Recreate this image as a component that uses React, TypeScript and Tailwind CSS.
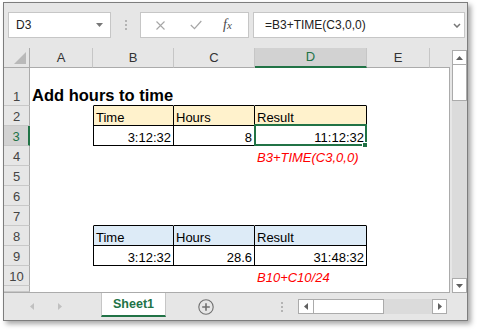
import type { ReactNode } from 'react';

// widths of columns A..F (F is the partial column at the right edge)
const COLS = ['w-[63px]', 'w-[81px]', 'w-[81px]', 'w-[112px]', 'w-[63px]', 'w-[19px]'];

type RowSpec = {
  n: number | string;
  h: string;
  edgeB?: boolean; // black line under B..D
  sides?: boolean; // black lines left of B and right of B, C, D
  bg?: string;
  selected?: boolean;
  a?: ReactNode;
  b?: ReactNode;
  c?: ReactNode;
  d?: ReactNode;
};

const Label = ({ children }: { children: ReactNode }) => (
  <span className="pl-[2px] pb-[1px] leading-[13px]">{children}</span>
);

const Value = ({ children }: { children: ReactNode }) => (
  <span className="ml-auto pr-[2px] pb-[1px] leading-[13px]">{children}</span>
);

const Note = ({ children }: { children: ReactNode }) => (
  <span className="pl-[2px] pb-[2px] leading-[13px] italic text-[#ff0000] whitespace-nowrap">{children}</span>
);

const rows: RowSpec[] = [
  {
    n: 1,
    h: 'h-[38px]',
    edgeB: true,
    a: (
      <span className="pl-[2px] pb-[3px] text-[16.5px] leading-[16.5px] font-bold text-black whitespace-nowrap">
        Add hours to time
      </span>
    ),
  },
  { n: 2, h: 'h-[20px]', edgeB: true, sides: true, bg: 'bg-[#fff2cc]', b: <Label>Time</Label>, c: <Label>Hours</Label>, d: <Label>Result</Label> },
  { n: 3, h: 'h-[20px]', edgeB: true, sides: true, selected: true, b: <Value>3:12:32</Value>, c: <Value>8</Value>, d: <Value>11:12:32</Value> },
  { n: 4, h: 'h-[20px]', d: <Note>B3+TIME(C3,0,0)</Note> },
  { n: 5, h: 'h-[20px]' },
  { n: 6, h: 'h-[20px]' },
  { n: 7, h: 'h-[20px]', edgeB: true },
  { n: 8, h: 'h-[20px]', edgeB: true, sides: true, bg: 'bg-[#ddebf7]', b: <Label>Time</Label>, c: <Label>Hours</Label>, d: <Label>Result</Label> },
  { n: 9, h: 'h-[20px]', edgeB: true, sides: true, b: <Value>3:12:32</Value>, c: <Value>28.6</Value>, d: <Value>31:48:32</Value> },
  { n: 10, h: 'h-[20px]', d: <Note>B10+C10/24</Note> },
  { n: '', h: 'h-[6px]' },
];

function SheetRow({ r }: { r: RowSpec }) {
  const line = r.edgeB ? 'border-b border-b-black' : '';
  const side = r.sides ? 'border-black' : 'border-transparent';
  const bg = r.bg ?? '';
  return (
    <div className={`flex ${r.h} shrink-0`}>
      <div
        className={`w-[26px] shrink-0 flex items-end justify-center border-b border-b-[#c8c8c8] overflow-hidden ${
          r.selected
            ? 'bg-[#d2d2d2] border-r-2 border-r-[#217346] text-[#217346]'
            : 'bg-[#e6e6e6] border-r border-r-[#ababab] text-[#444]'
        }`}
      >
        <span className="leading-[13px] pb-[2px]">{r.n}</span>
      </div>
      <div className={`${COLS[0]} shrink-0 flex items-end relative z-10 overflow-visible`}>{r.a}</div>
      <div className={`${COLS[1]} shrink-0 flex items-end border-l border-r ${side} ${line} ${bg}`}>{r.b}</div>
      <div className={`${COLS[2]} shrink-0 flex items-end border-r ${side} ${line} ${bg}`}>{r.c}</div>
      <div className={`${COLS[3]} shrink-0 flex items-end border-r ${side} ${line} ${bg} relative`}>
        {r.d}
        {r.selected && (
          <>
            <div className="absolute left-[-1px] top-[-2px] w-[113px] h-[22px] border-2 border-[#217346]" />
            <div className="absolute left-[107px] top-[16px] w-[6px] h-[6px] bg-[#217346] border border-white" />
          </>
        )}
      </div>
      <div className={`${COLS[4]} shrink-0`} />
      <div className={`${COLS[5]} shrink-0`} />
    </div>
  );
}

function ColHead({ w, label, selected, last }: { w: string; label: string; selected?: boolean; last?: boolean }) {
  return (
    <div
      className={`${w} shrink-0 flex items-center justify-center ${
        selected
          ? 'bg-[#d2d2d2] text-[#217346] border-b-2 border-b-[#217346] border-r border-r-[#c6c6c6]'
          : `bg-[#e6e6e6] text-[#333] border-b border-b-[#ababab] ${last ? '' : 'border-r border-r-[#c6c6c6]'}`
      }`}
    >
      {label}
    </div>
  );
}

const Tri = ({ dir, color }: { dir: 'up' | 'down' | 'left' | 'right'; color: string }) => {
  const pts = {
    up: '0,4 7,4 3.5,0',
    down: '0,0 7,0 3.5,4',
    left: '4,0 4,7 0,3.5',
    right: '0,0 0,7 4,3.5',
  }[dir];
  const vertical = dir === 'up' || dir === 'down';
  return (
    <svg width={vertical ? 7 : 4} height={vertical ? 4 : 7} viewBox={vertical ? '0 0 7 4' : '0 0 4 7'}>
      <polygon points={pts} fill={color} />
    </svg>
  );
};

export default function App() {
  return (
    <div className="w-[477px] h-[331px] bg-white pl-[3px] pt-[2px] font-['Liberation_Sans',Arial,sans-serif] text-[13px] text-black">
      <div className="w-[465px] h-[319px] border border-[#7d7d7d] bg-[#e6e6e6] shadow-[3px_3px_5px_rgba(0,0,0,0.35)] flex flex-col">
        {/* formula bar */}
        <div className="h-[45px] pt-[9px] flex items-start shrink-0">
          <div className="ml-[4px] w-[103px] h-[26px] bg-white border border-[#c6c6c6] flex items-center justify-between pl-[7px] pr-[7px] text-[12px] text-[#222]">
            <span>D3</span>
            <Tri dir="down" color="#777" />
          </div>
          <div className="ml-[14px] mt-[8px] flex flex-col gap-[2px]">
            <div className="w-[2px] h-[2px] bg-[#b4b4b4]" />
            <div className="w-[2px] h-[2px] bg-[#b4b4b4]" />
            <div className="w-[2px] h-[2px] bg-[#b4b4b4]" />
          </div>
          <div className="ml-[13px] w-[109px] h-[26px] bg-white border border-[#c6c6c6] flex items-center">
            <svg className="ml-[15px]" width="9" height="9" viewBox="0 0 9 9">
              <path d="M0.5 0.5 L8.5 8.5 M8.5 0.5 L0.5 8.5" stroke="#a6a6a6" strokeWidth="1.1" fill="none" />
            </svg>
            <svg className="ml-[25px]" width="12" height="10" viewBox="0 0 12 10">
              <path d="M0.8 5 L4.5 8.6 L11.3 1" stroke="#a6a6a6" strokeWidth="1.2" fill="none" />
            </svg>
            <span className="ml-[21px] font-['Liberation_Serif',serif] italic text-[14px] text-[#4a4a4a] leading-none">
              f<span className="text-[11px]">x</span>
            </span>
          </div>
          <div className="ml-[4px] w-[212px] h-[26px] bg-white border border-[#c6c6c6] flex items-center justify-between pl-[11px] pr-[3px] text-[12px] text-[#222]">
            <span>=B3+TIME(C3,0,0)</span>
            <svg width="8" height="5" viewBox="0 0 8 5">
              <path d="M1 1 L4 4 L7 1" stroke="#777" strokeWidth="1.5" fill="none" />
            </svg>
          </div>
        </div>

        {/* sheet grid + vertical scrollbar */}
        <div className="h-[245px] flex shrink-0">
          <div className="w-[446px] flex flex-col">
            <div className="h-[20px] flex shrink-0">
              <div className="w-[26px] shrink-0 bg-[#e6e6e6] border-r border-r-[#ababab] border-b border-b-[#ababab] flex items-end justify-end pr-[3px] pb-[3px]">
                <svg width="12" height="12" viewBox="0 0 12 12">
                  <polygon points="12,0 12,12 0,12" fill="#b9b9b9" />
                </svg>
              </div>
              <ColHead w={COLS[0]} label="A" />
              <ColHead w={COLS[1]} label="B" />
              <ColHead w={COLS[2]} label="C" />
              <ColHead w={COLS[3]} label="D" selected />
              <ColHead w={COLS[4]} label="E" />
              <ColHead w="w-[20px]" label="" last />
            </div>
            <div className="h-[225px] bg-white border-r border-b border-[#ababab] flex flex-col overflow-hidden">
              {rows.map((r, i) => (
                <SheetRow key={i} r={r} />
              ))}
            </div>
          </div>
          <div className="ml-[2px] w-[15px] pt-[2px] flex flex-col">
            <div className="h-[15px] bg-white border border-[#ababab] flex items-center justify-center">
              <Tri dir="up" color="#606060" />
            </div>
            <div className="h-[36px] bg-white border border-t-0 border-[#ababab]" />
            <div className="flex-1 bg-[#dbdbdb]" />
            <div className="h-[15px] bg-white border border-[#ababab] flex items-center justify-center">
              <Tri dir="down" color="#606060" />
            </div>
          </div>
        </div>

        {/* sheet tabs + horizontal scrollbar */}
        <div className="h-[27px] flex items-center shrink-0">
          <div className="ml-[26px]">
            <Tri dir="left" color="#c0c0c0" />
          </div>
          <div className="ml-[24px]">
            <Tri dir="right" color="#c0c0c0" />
          </div>
          <div className="ml-[39px] self-start w-[65px] h-[24px] bg-white border-l border-r border-[#c6c6c6] border-b-2 border-b-[#217346] flex items-center justify-center text-[12.5px] font-bold text-[#217346]">
            Sheet1
          </div>
          <svg className="ml-[32px]" width="16" height="16" viewBox="0 0 16 16">
            <circle cx="8" cy="8" r="7.2" stroke="#707070" strokeWidth="1.1" fill="none" />
            <path d="M8 4.2 V11.8 M4.2 8 H11.8" stroke="#707070" strokeWidth="1.6" />
          </svg>
          <div className="ml-[67px] flex flex-col gap-[2px]">
            <div className="w-[2px] h-[2px] bg-[#b4b4b4]" />
            <div className="w-[2px] h-[2px] bg-[#b4b4b4]" />
            <div className="w-[2px] h-[2px] bg-[#b4b4b4]" />
          </div>
          <div className="ml-[15px] h-[15px] flex">
            <div className="w-[16px] bg-white border border-[#ababab] flex items-center justify-center">
              <Tri dir="left" color="#606060" />
            </div>
            <div className="w-[70px] bg-white border border-l-0 border-[#ababab]" />
            <div className="w-[48px] bg-[#dbdbdb]" />
            <div className="w-[15px] bg-white border border-[#ababab] flex items-center justify-center">
              <Tri dir="right" color="#606060" />
            </div>
          </div>
        </div>
      </div>
    </div>
  );
}
